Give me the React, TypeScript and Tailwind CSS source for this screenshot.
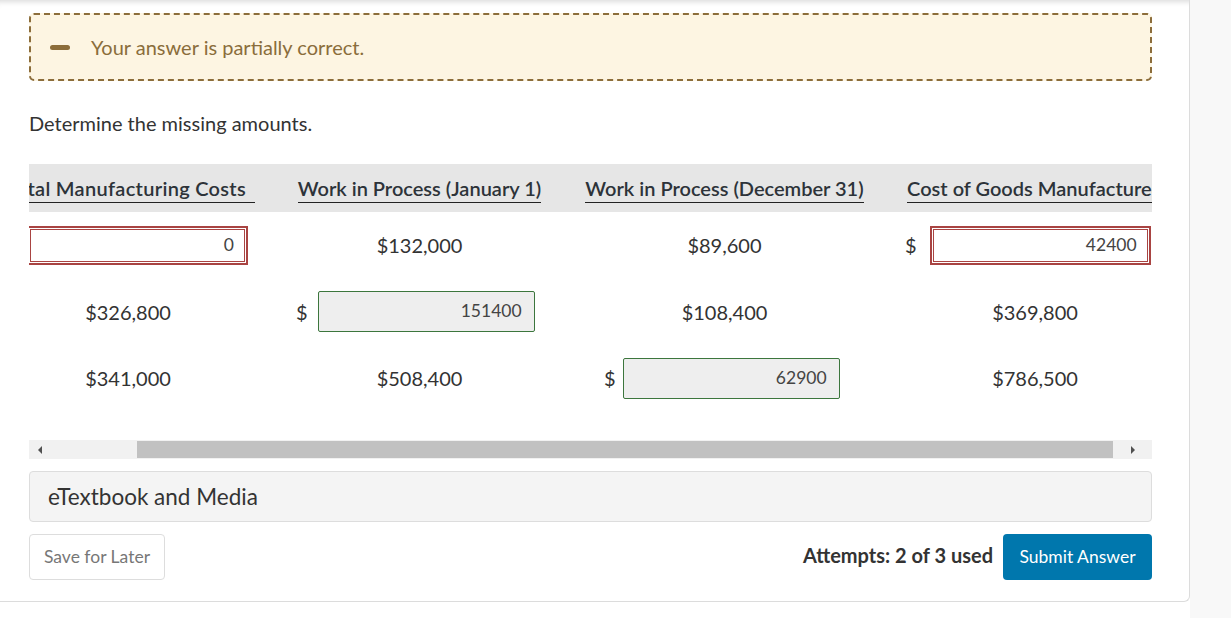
import React from "react";

function RedInput({ value }: { value: string }) {
	return (
		<div className="w-[221px] h-[39px] border-2 border-[#a94442] shadow-[inset_0_0_0_1px_#fff,inset_0_0_0_2px_#a94442] bg-white flex items-center justify-end pr-[12px] text-[17.5px] text-[#444]">
			{value}
		</div>
	);
}

function GreenInput({ value }: { value: string }) {
	return (
		<div className="w-[217px] h-[41px] border border-[#3c763d] rounded-[2px] bg-[#eeeeee] flex items-center justify-end pr-[12px] text-[17.5px] text-[#444]">
			{value}
		</div>
	);
}

function Header({ title }: { title: string }) {
	return (
		<div className="h-[48px] bg-[#e6e6e6] flex justify-center pt-[11px]">
			<span className="h-[28px] leading-[26px] whitespace-nowrap font-semibold text-[20px] text-[#2d3339] border-b border-[#222]">
				{title}
			</span>
		</div>
	);
}

function Value({ text, className }: { text: string; className?: string }) {
	return (
		<div className={`flex items-center justify-center text-[20px] text-[#333] ${className ?? ""}`}>
			{text}
		</div>
	);
}

export default function App() {
	return (
		<div className="w-full h-[618px] flex bg-white font-['Lato',sans-serif] shadow-[inset_0_7px_6px_-6px_rgba(0,0,0,0.18)]">
			<div className="w-[1190px] shrink-0">
				<div className="h-[602px] border-r border-b border-[#dcdcdc] rounded-br-[6px] pl-[29px] pt-[13px]">
					{/* feedback */}
					<div className="w-[1123px] h-[68px] border-2 border-dashed border-[#8c6d3a] rounded-[5px] bg-[#fdf5e2] flex items-center">
						<div className="ml-[19px] w-[20px] h-[5px] rounded-full bg-[#8c6d3a]" />
						<span className="ml-[21px] text-[20px] text-[#8a6d3b]">
							Your answer is partially correct.
						</span>
					</div>

					<p className="mt-[30px] text-[20px] text-[#333] leading-[24px]">
						Determine the missing amounts.
					</p>

					{/* table, scrolled sideways */}
					<div className="mt-[29px] w-[1123px] overflow-hidden">
						<div className="flex -ml-[24px] w-max">
							<div className="w-[270px] flex flex-col">
								<div className="h-[48px] bg-[#e6e6e6] flex justify-end pr-[20px] pt-[11px]">
									<span className="h-[28px] leading-[26px] whitespace-nowrap font-semibold text-[20px] tracking-[0.3px] text-[#2d3339] border-b border-[#222] pr-[9px]">
										Total Manufacturing Costs
									</span>
								</div>
								<div className="h-[66px] flex items-center pl-[22px]">
									<RedInput value="0" />
								</div>
								<Value text="$326,800" className="h-[67px] pr-[24px]" />
								<Value text="$341,000" className="h-[66px] pr-[24px]" />
							</div>
							<div className="w-[289px] flex flex-col">
								<Header title="Work in Process (January 1)" />
								<Value text="$132,000" className="h-[66px]" />
								<div className="h-[67px] flex items-center pl-[21px] text-[20px] text-[#333]">
									<span>$</span>
									<div className="ml-[10px]">
										<GreenInput value="151400" />
									</div>
								</div>
								<Value text="$508,400" className="h-[66px]" />
							</div>
							<div className="w-[321px] flex flex-col">
								<Header title="Work in Process (December 31)" />
								<Value text="$89,600" className="h-[66px]" />
								<Value text="$108,400" className="h-[67px]" />
								<div className="h-[66px] flex items-center pl-[40px] text-[20px] text-[#333]">
									<span>$</span>
									<div className="ml-[7px]">
										<GreenInput value="62900" />
									</div>
								</div>
							</div>
							<div className="w-[300px] flex flex-col">
								<Header title="Cost of Goods Manufactured" />
								<div className="h-[66px] flex items-center pl-[20px] text-[20px] text-[#333]">
									<span>$</span>
									<div className="ml-[13px]">
										<RedInput value="42400" />
									</div>
								</div>
								<Value text="$369,800" className="h-[67px]" />
								<Value text="$786,500" className="h-[66px]" />
							</div>
						</div>
					</div>

					{/* scrollbar */}
					<div className="mt-[29px] w-[1123px] h-[19px] bg-[#f1f1f1] flex items-center">
						<div className="w-[108px] flex items-center pl-[9px]">
							<div className="w-0 h-0 border-y-[4px] border-y-transparent border-r-[4px] border-r-[#505050]" />
						</div>
						<div className="w-[976px] h-[17px] bg-[#c1c1c1]" />
						<div className="flex-1 flex items-center justify-center">
							<div className="w-0 h-0 border-y-[4px] border-y-transparent border-l-[4px] border-l-[#505050]" />
						</div>
					</div>

					{/* etextbook */}
					<div className="mt-[12px] w-[1123px] h-[51px] bg-[#f4f4f4] border border-[#dddddd] rounded-[4px] flex items-center pl-[18px] text-[22.5px] text-[#333]">
						eTextbook and Media
					</div>

					{/* actions */}
					<div className="mt-[12px] w-[1123px] flex items-center">
						<button className="w-[136px] h-[46px] border border-[#dddddd] rounded-[4px] bg-white text-[17.5px] text-[#777]">
							Save for Later
						</button>
						<div className="flex-1" />
						<span className="text-[20px] font-bold text-[#333] -mt-[5px]">
							Attempts: 2 of 3 used
						</span>
						<button className="ml-[10px] w-[149px] h-[46px] rounded-[4px] bg-[#0077ad] text-white text-[17.5px]">
							Submit Answer
						</button>
					</div>
				</div>
			</div>
			<div className="flex-1 bg-[#f8f8f8]" />
		</div>
	);
}
